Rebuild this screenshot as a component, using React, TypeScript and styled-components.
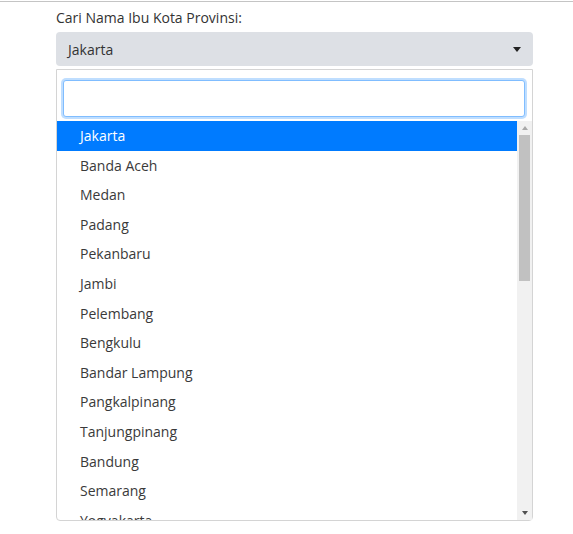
import React from "react";
import styled, { createGlobalStyle } from "styled-components";

const GlobalStyle = createGlobalStyle`
  html, body { margin: 0; padding: 0; background: #fff; }
  body { font-family: "Open Sans", "Noto Sans", sans-serif; color: #333; }
  * { box-sizing: border-box; }
`;

const TopRule = styled.div`
  height: 2px;
  border-bottom: 1px solid #c4c4c4;
`;

const Form = styled.div`
  width: 477px;
  margin-left: 56px;
  display: flex;
  flex-direction: column;
`;

const Label = styled.label`
  font-size: 14px;
  line-height: 20px;
  margin-top: 6px;
  color: #333;
`;

const SelectBox = styled.div`
  margin-top: 4px;
  height: 34px;
  background: #dde0e5;
  border-radius: 4px;
  display: flex;
  align-items: center;
  justify-content: space-between;
  padding: 0 12px;
  font-size: 14px;
  color: #333;
`;

const Caret = styled.span`
  width: 0;
  height: 0;
  border-left: 4px solid transparent;
  border-right: 4px solid transparent;
  border-top: 5px solid #222;
`;

const Dropdown = styled.div`
  margin-top: 3px;
  border: 1px solid #d4d4d4;
  border-radius: 0 0 4px 4px;
  display: flex;
  flex-direction: column;
  background: #fff;
`;

const SearchWrap = styled.div`
  padding: 10px 7px 4px 6px;
`;

const SearchInput = styled.input`
  display: block;
  width: 100%;
  height: 37px;
  border: 1px solid #80bdff;
  border-radius: 3px;
  box-shadow: 0 0 0 2px rgba(0, 123, 255, 0.25);
  outline: none;
  font-family: inherit;
  font-size: 14px;
  padding: 0 8px;
`;

const ListArea = styled.div`
  display: flex;
  height: 399px;
`;

const List = styled.ul`
  flex: 1;
  list-style: none;
  margin: 0;
  padding: 0;
  overflow: hidden;
`;

const Item = styled.li<{ $active?: boolean }>`
  height: 29.6px;
  line-height: 29.6px;
  padding-left: 23px;
  font-size: 14px;
  white-space: nowrap;
  color: ${(p) => (p.$active ? "#fff" : "#3a3a3a")};
  background: ${(p) => (p.$active ? "#007bff" : "transparent")};
`;

const ScrollTrack = styled.div`
  width: 15px;
  background: #f1f1f1;
  display: flex;
  flex-direction: column;
  align-items: center;
`;

const ScrollButton = styled.div`
  height: 14px;
  width: 15px;
  display: flex;
  align-items: center;
  justify-content: center;
`;

const Arrow = styled.span<{ $dir: "up" | "down"; $color: string }>`
  width: 0;
  height: 0;
  border-left: 3.5px solid transparent;
  border-right: 3.5px solid transparent;
  ${(p) =>
    p.$dir === "up"
      ? `border-bottom: 4px solid ${p.$color};`
      : `border-top: 4px solid ${p.$color};`}
`;

const ThumbZone = styled.div`
  flex: 1;
  width: 100%;
  display: flex;
  justify-content: center;
`;

const Thumb = styled.div`
  width: 11px;
  height: 146px;
  background: #c1c1c1;
`;

const cities = [
  "Jakarta",
  "Banda Aceh",
  "Medan",
  "Padang",
  "Pekanbaru",
  "Jambi",
  "Pelembang",
  "Bengkulu",
  "Bandar Lampung",
  "Pangkalpinang",
  "Tanjungpinang",
  "Bandung",
  "Semarang",
  "Yogyakarta",
  "Surabaya",
  "Serang",
  "Denpasar",
  "Mataram",
  "Kupang",
  "Pontianak",
];

export default function App() {
  return (
    <>
      <GlobalStyle />
      <TopRule />
      <Form>
        <Label>Cari Nama Ibu Kota Provinsi:</Label>
        <SelectBox>
          <span>Jakarta</span>
          <Caret />
        </SelectBox>
        <Dropdown>
          <SearchWrap>
            <SearchInput type="search" />
          </SearchWrap>
          <ListArea>
            <List>
              {cities.map((c, i) => (
                <Item key={c} $active={i === 0}>
                  {c}
                </Item>
              ))}
            </List>
            <ScrollTrack>
              <ScrollButton>
                <Arrow $dir="up" $color="#a8a8a8" />
              </ScrollButton>
              <ThumbZone>
                <Thumb />
              </ThumbZone>
              <ScrollButton>
                <Arrow $dir="down" $color="#505050" />
              </ScrollButton>
            </ScrollTrack>
          </ListArea>
        </Dropdown>
      </Form>
    </>
  );
}
